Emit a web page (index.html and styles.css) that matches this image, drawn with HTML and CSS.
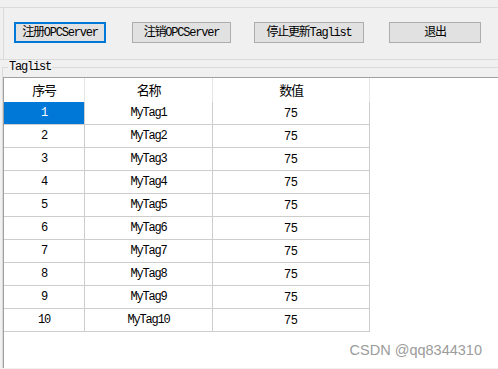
FILE: index.html
```html
<!DOCTYPE html>
<html>
    <head>
        <meta charset="utf-8">
        <title>OPC Taglist</title>
        <link rel="stylesheet" href="styles.css">
    </head>
    <body>
        <div class="top">
            <div class="toolbar">
                <button class="btn b1 focus">注册OPCServer</button>
                <button class="btn b2">注销OPCServer</button>
                <button class="btn b3">停止更新Taglist</button>
                <button class="btn b4">退出</button>
            </div>
        </div>
        <fieldset class="group">
            <legend>Taglist</legend>
            <div class="list">
                <div class="row head">
                    <div class="cell">序号</div>
                    <div class="cell">名称</div>
                    <div class="cell">数值</div>
                </div>
                <div class="row">
                    <div class="cell sel">1</div>
                    <div class="cell">MyTag1</div>
                    <div class="cell val">75</div>
                </div>
                <div class="row">
                    <div class="cell">2</div>
                    <div class="cell">MyTag2</div>
                    <div class="cell val">75</div>
                </div>
                <div class="row">
                    <div class="cell">3</div>
                    <div class="cell">MyTag3</div>
                    <div class="cell val">75</div>
                </div>
                <div class="row">
                    <div class="cell">4</div>
                    <div class="cell">MyTag4</div>
                    <div class="cell val">75</div>
                </div>
                <div class="row">
                    <div class="cell">5</div>
                    <div class="cell">MyTag5</div>
                    <div class="cell val">75</div>
                </div>
                <div class="row">
                    <div class="cell">6</div>
                    <div class="cell">MyTag6</div>
                    <div class="cell val">75</div>
                </div>
                <div class="row">
                    <div class="cell">7</div>
                    <div class="cell">MyTag7</div>
                    <div class="cell val">75</div>
                </div>
                <div class="row">
                    <div class="cell">8</div>
                    <div class="cell">MyTag8</div>
                    <div class="cell val">75</div>
                </div>
                <div class="row">
                    <div class="cell">9</div>
                    <div class="cell">MyTag9</div>
                    <div class="cell val">75</div>
                </div>
                <div class="row">
                    <div class="cell">10</div>
                    <div class="cell">MyTag10</div>
                    <div class="cell val">75</div>
                </div>
            </div>
        </fieldset>
        <div class="mark">CSDN @qq8344310</div>
    </body>
</html>
```

FILE: styles.css
```css
html, body {margin:0; padding:0; width:498px; height:369px; overflow:hidden; background:#f0f0f0;}
body {position:relative; font:12px "Liberation Mono", "Noto Sans CJK SC", monospace; color:#000;}

/* top button panel */
.top {margin-top:7px; border-top:1px solid #dadada; border-bottom:1px solid #dadada;}
.toolbar {margin-left:3px; border-left:1px solid #dadada; height:51px; padding-top:14px; box-sizing:border-box; display:flex; align-items:flex-start;}
.btn {height:21px; padding:0; margin:0; background:#e1e1e1; border:1px solid #adadad; font:12px "Liberation Mono", "Noto Sans CJK SC", monospace; letter-spacing:-1.2px; color:#000; box-sizing:border-box; line-height:18px;}
.btn.focus {border:2px solid #0078d7; line-height:16px;}
.b1 {margin-left:10px; width:92px;}
.b2 {margin-left:26px; width:99px;}
.b3 {margin-left:23px; width:110px;}
.b4 {margin-left:25px; width:92px;}

/* group box */
.group {margin:0 0 0 2px; padding:0; border:0; border-top:1px solid #dadada; border-left:1px solid #dadada; min-width:0;}
.group legend {margin-left:5px; padding:0 1px; font-size:12px; line-height:14px; letter-spacing:-1.2px; margin-top:1px;}

/* list view */
.list {margin-top:3px; width:494px; height:290px; overflow:hidden; background:#fff; border-top:1px solid #a0a0a0; border-left:1px solid #a0a0a0;}
.row {display:grid; grid-template-columns:81px 128px 157px;}
.cell {height:23px; box-sizing:border-box; border-right:1px solid #cdcdcd; border-bottom:1px solid #cdcdcd; text-align:center; line-height:22px; letter-spacing:-1.2px;}
.head .cell {height:24px; border-right-color:#e5e5e5; border-bottom:0; font:13px "Noto Sans CJK SC", sans-serif; line-height:23px;}
.cell.val {font:12px "Liberation Sans", sans-serif; line-height:22px; letter-spacing:0;}
.cell.sel {background:#0078d7; color:#fff;}

.mark {position:absolute; right:16px; bottom:11px; font:14.5px "Liberation Sans", sans-serif; color:#9c9c9c;}
```
